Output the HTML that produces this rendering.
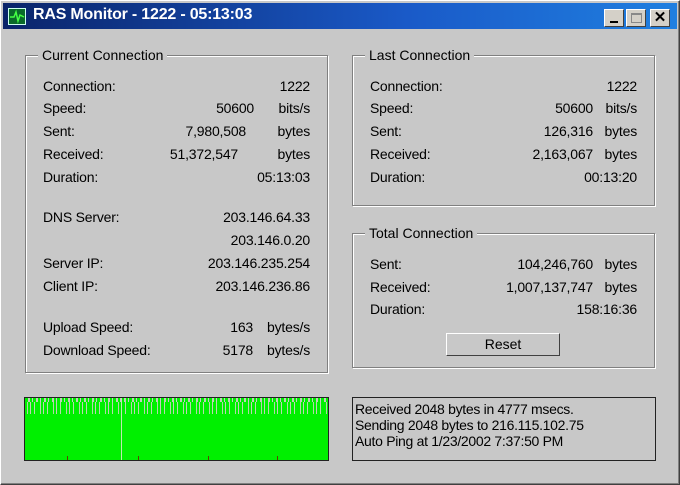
<!DOCTYPE html>
<html><head><style>
*{margin:0;padding:0;box-sizing:border-box}
body{width:680px;height:485px;background:#c8c8c8;font-family:"Liberation Sans",Arial,sans-serif;font-size:14px;color:#000;position:relative;overflow:hidden}
.win{position:absolute;left:0;top:0;width:680px;height:485px;border:1px solid #fff;border-right-color:#404040;border-bottom-color:#404040;box-shadow:inset -1px -1px #808080}
.title{position:absolute;left:3px;top:3px;width:674px;height:26px;background:linear-gradient(90deg,#0a246a,#1a5ac8 60%,#1f7fe0)}
.title span{position:absolute;left:30px;top:3px;color:#fff;font-weight:bold;font-size:16px;letter-spacing:-0.2px}
.ico{position:absolute;left:5px;top:5px;width:18px;height:17px;background:#0a6a2a;border:1px solid #cfe}
.btn{position:absolute;top:6px;width:20px;height:18px;background:#d4d0c8;border:1px solid #fff;border-right-color:#404040;border-bottom-color:#404040}
.gb{position:absolute;border:1px solid #808080;box-shadow:1px 1px 0 #fff, inset 1px 1px 0 #fff}
.gl{position:absolute;background:#c8c8c8;padding:0 4px;line-height:18px;top:-10px;left:12px}
.t{position:absolute;line-height:18px;white-space:nowrap;letter-spacing:-0.2px}
.r{text-align:right}
</style></head><body>
<div class="win"></div>
<div class="title"><div class="ico"><svg width="16" height="15"><polyline points="1,8 5,8 7,3 9,12 11,6 15,8" fill="none" stroke="#4f4" stroke-width="1.5"/></svg></div><span>RAS Monitor - 1222 - 05:13:03</span>
<div class="btn" style="left:601px"><div style="position:absolute;left:5px;top:11px;width:8px;height:2px;background:#000"></div></div>
<div class="btn" style="left:623px"><div style="position:absolute;left:4px;top:3px;width:11px;height:10px;border:1px solid #888;border-top-width:2px"></div></div>
<div class="btn" style="left:647px;font-weight:bold;font-size:15px;text-align:center;line-height:16px">✕</div>
</div>

<div class="gb" style="left:25px;top:55px;width:303px;height:318px"><div class="gl" style="left:12px">Current Connection</div></div>
<div class="gb" style="left:352px;top:55px;width:303px;height:151px"><div class="gl">Last Connection</div></div>
<div class="gb" style="left:352px;top:233px;width:303px;height:135px"><div class="gl">Total Connection</div></div>

<div class="t" style="left:43px;top:77px">Connection:</div><div class="t r" style="right:370px;top:77px">1222</div>
<div class="t" style="left:43px;top:99px">Speed:</div><div class="t r" style="right:426px;top:99px">50600</div><div class="t r" style="right:370px;top:99px">bits/s</div>
<div class="t" style="left:43px;top:122px">Sent:</div><div class="t r" style="right:434px;top:122px">7,980,508</div><div class="t r" style="right:370px;top:122px">bytes</div>
<div class="t" style="left:43px;top:145px">Received:</div><div class="t r" style="right:442px;top:145px">51,372,547</div><div class="t r" style="right:370px;top:145px">bytes</div>
<div class="t" style="left:43px;top:168px">Duration:</div><div class="t r" style="right:370px;top:168px">05:13:03</div>
<div class="t" style="left:43px;top:208px">DNS Server:</div><div class="t r" style="right:370px;top:208px">203.146.64.33</div>
<div class="t r" style="right:370px;top:231px">203.146.0.20</div>
<div class="t" style="left:43px;top:254px">Server IP:</div><div class="t r" style="right:370px;top:254px">203.146.235.254</div>
<div class="t" style="left:43px;top:277px">Client IP:</div><div class="t r" style="right:370px;top:277px">203.146.236.86</div>
<div class="t" style="left:43px;top:318px">Upload Speed:</div><div class="t r" style="right:427px;top:318px">163</div><div class="t r" style="right:370px;top:318px">bytes/s</div>
<div class="t" style="left:43px;top:341px">Download Speed:</div><div class="t r" style="right:427px;top:341px">5178</div><div class="t r" style="right:370px;top:341px">bytes/s</div>

<div class="t" style="left:370px;top:77px">Connection:</div><div class="t r" style="right:43px;top:77px">1222</div>
<div class="t" style="left:370px;top:99px">Speed:</div><div class="t r" style="right:87px;top:99px">50600</div><div class="t r" style="right:43px;top:99px">bits/s</div>
<div class="t" style="left:370px;top:122px">Sent:</div><div class="t r" style="right:87px;top:122px">126,316</div><div class="t r" style="right:43px;top:122px">bytes</div>
<div class="t" style="left:370px;top:145px">Received:</div><div class="t r" style="right:87px;top:145px">2,163,067</div><div class="t r" style="right:43px;top:145px">bytes</div>
<div class="t" style="left:370px;top:168px">Duration:</div><div class="t r" style="right:43px;top:168px">00:13:20</div>

<div class="t" style="left:370px;top:255px">Sent:</div><div class="t r" style="right:87px;top:255px">104,246,760</div><div class="t r" style="right:43px;top:255px">bytes</div>
<div class="t" style="left:370px;top:278px">Received:</div><div class="t r" style="right:87px;top:278px">1,007,137,747</div><div class="t r" style="right:43px;top:278px">bytes</div>
<div class="t" style="left:370px;top:300px">Duration:</div><div class="t r" style="right:43px;top:300px">158:16:36</div>
<div style="position:absolute;left:446px;top:333px;width:114px;height:23px;border:1px solid #fff;border-right-color:#404040;border-bottom-color:#404040;text-align:center;line-height:20px">Reset</div>

<div style="position:absolute;left:24px;top:397px;width:305px;height:64px;border:1px solid #222;background:#00f000;overflow:hidden">
 <div style="position:absolute;left:0;top:0;width:303px;height:16px;background:repeating-linear-gradient(90deg,#00f000 0 2px,#b0d8a8 2px 3px,#00f000 3px 5px,#c0d0b8 5px 6px,#00f000 6px 9px,#b8d8b0 9px 10px,#00f000 10px 13px)"></div>
 <div style="position:absolute;left:0;top:0;width:303px;height:4px;background:repeating-linear-gradient(90deg,#00f000 0 3px,#c0d0b8 3px 5px,#00f000 5px 7px,#c8c8c8 7px 8px)"></div>
 <div style="position:absolute;left:96px;top:0;width:1px;height:62px;background:#c0e8b0"></div>
 <div style="position:absolute;left:42px;top:58px;width:1px;height:4px;background:#604000"></div>
 <div style="position:absolute;left:113px;top:58px;width:1px;height:4px;background:#604000"></div>
 <div style="position:absolute;left:183px;top:58px;width:1px;height:4px;background:#604000"></div>
 <div style="position:absolute;left:252px;top:58px;width:1px;height:4px;background:#604000"></div>
</div>

<div style="position:absolute;left:352px;top:397px;width:304px;height:64px;border:1px solid #222;padding:3px 0 0 2px;line-height:16px;letter-spacing:-0.3px">Received 2048 bytes in 4777 msecs.<br>Sending 2048 bytes to 216.115.102.75<br>Auto Ping at 1/23/2002 7:37:50 PM</div>
</body></html>
